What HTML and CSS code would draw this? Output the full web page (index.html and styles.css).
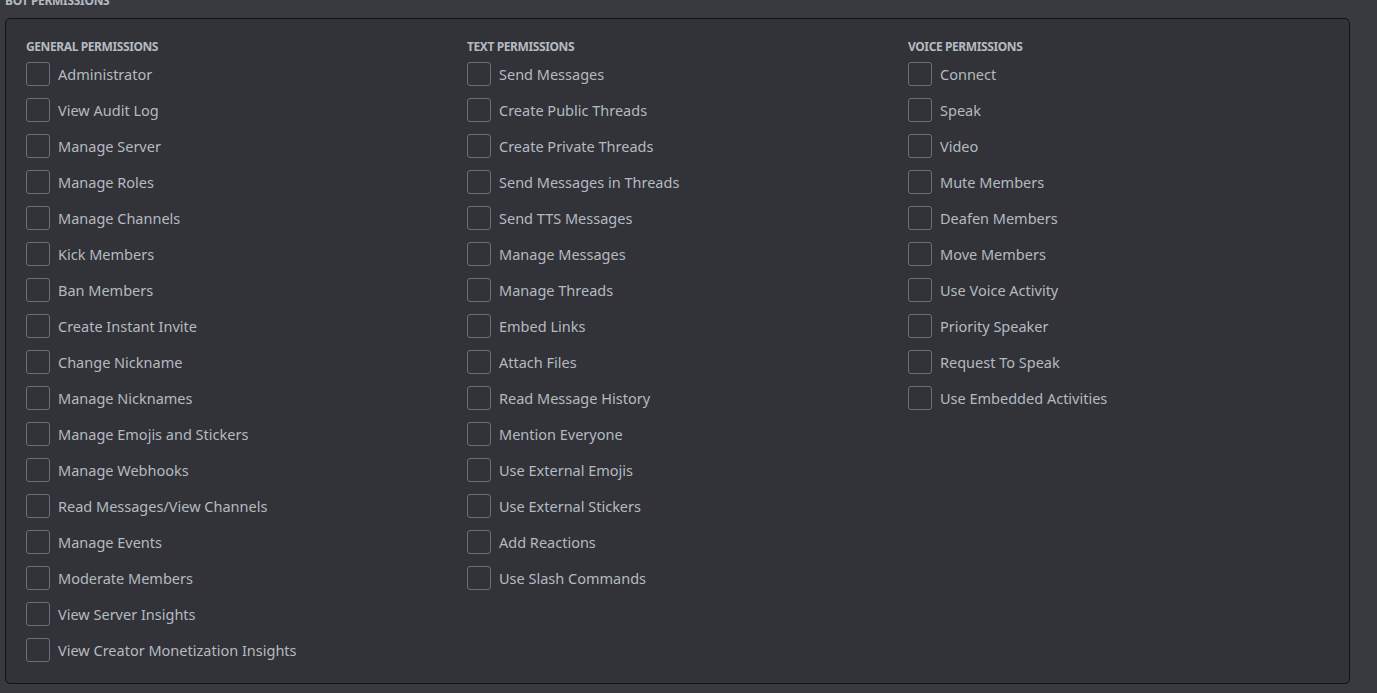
FILE: index.html
```html
<!DOCTYPE html>
<html>
<head>
<meta charset="utf-8">
<link rel="stylesheet" href="styles.css">
</head>
<body>
<div class="page">
  <h2 class="title">Bot Permissions</h2>
  <div class="box">
    <div class="col">
      <h3 class="head">General Permissions</h3>
      <ul class="list">
        <li class="item"><span class="cb"></span><span class="lbl">Administrator</span></li>
        <li class="item"><span class="cb"></span><span class="lbl">View Audit Log</span></li>
        <li class="item"><span class="cb"></span><span class="lbl">Manage Server</span></li>
        <li class="item"><span class="cb"></span><span class="lbl">Manage Roles</span></li>
        <li class="item"><span class="cb"></span><span class="lbl">Manage Channels</span></li>
        <li class="item"><span class="cb"></span><span class="lbl">Kick Members</span></li>
        <li class="item"><span class="cb"></span><span class="lbl">Ban Members</span></li>
        <li class="item"><span class="cb"></span><span class="lbl">Create Instant Invite</span></li>
        <li class="item"><span class="cb"></span><span class="lbl">Change Nickname</span></li>
        <li class="item"><span class="cb"></span><span class="lbl">Manage Nicknames</span></li>
        <li class="item"><span class="cb"></span><span class="lbl">Manage Emojis and Stickers</span></li>
        <li class="item"><span class="cb"></span><span class="lbl">Manage Webhooks</span></li>
        <li class="item"><span class="cb"></span><span class="lbl">Read Messages/View Channels</span></li>
        <li class="item"><span class="cb"></span><span class="lbl">Manage Events</span></li>
        <li class="item"><span class="cb"></span><span class="lbl">Moderate Members</span></li>
        <li class="item"><span class="cb"></span><span class="lbl">View Server Insights</span></li>
        <li class="item"><span class="cb"></span><span class="lbl">View Creator Monetization Insights</span></li>
      </ul>
    </div>
    <div class="col">
      <h3 class="head">Text Permissions</h3>
      <ul class="list">
        <li class="item"><span class="cb"></span><span class="lbl">Send Messages</span></li>
        <li class="item"><span class="cb"></span><span class="lbl">Create Public Threads</span></li>
        <li class="item"><span class="cb"></span><span class="lbl">Create Private Threads</span></li>
        <li class="item"><span class="cb"></span><span class="lbl">Send Messages in Threads</span></li>
        <li class="item"><span class="cb"></span><span class="lbl">Send TTS Messages</span></li>
        <li class="item"><span class="cb"></span><span class="lbl">Manage Messages</span></li>
        <li class="item"><span class="cb"></span><span class="lbl">Manage Threads</span></li>
        <li class="item"><span class="cb"></span><span class="lbl">Embed Links</span></li>
        <li class="item"><span class="cb"></span><span class="lbl">Attach Files</span></li>
        <li class="item"><span class="cb"></span><span class="lbl">Read Message History</span></li>
        <li class="item"><span class="cb"></span><span class="lbl">Mention Everyone</span></li>
        <li class="item"><span class="cb"></span><span class="lbl">Use External Emojis</span></li>
        <li class="item"><span class="cb"></span><span class="lbl">Use External Stickers</span></li>
        <li class="item"><span class="cb"></span><span class="lbl">Add Reactions</span></li>
        <li class="item"><span class="cb"></span><span class="lbl">Use Slash Commands</span></li>
      </ul>
    </div>
    <div class="col">
      <h3 class="head">Voice Permissions</h3>
      <ul class="list">
        <li class="item"><span class="cb"></span><span class="lbl">Connect</span></li>
        <li class="item"><span class="cb"></span><span class="lbl">Speak</span></li>
        <li class="item"><span class="cb"></span><span class="lbl">Video</span></li>
        <li class="item"><span class="cb"></span><span class="lbl">Mute Members</span></li>
        <li class="item"><span class="cb"></span><span class="lbl">Deafen Members</span></li>
        <li class="item"><span class="cb"></span><span class="lbl">Move Members</span></li>
        <li class="item"><span class="cb"></span><span class="lbl">Use Voice Activity</span></li>
        <li class="item"><span class="cb"></span><span class="lbl">Priority Speaker</span></li>
        <li class="item"><span class="cb"></span><span class="lbl">Request To Speak</span></li>
        <li class="item"><span class="cb"></span><span class="lbl">Use Embedded Activities</span></li>
      </ul>
    </div>
  </div>
</div>
</body>
</html>
```
FILE: styles.css
```css
html, body {
  margin: 0;
  padding: 0;
  background: #383a40;
  height: 100%;
  overflow: hidden;
}
body {
  font-family: "Noto Sans", "Open Sans", sans-serif;
  color: #b5bac1;
}
.page {
  padding-left: 5px;
}
.title {
  margin: -7px 0 0 0;
  height: 25px;
  font-size: 12px;
  font-weight: 700;
  line-height: 16px;
  letter-spacing: -0.3px;
  text-transform: uppercase;
  color: #b5bac1;
}
.box {
  box-sizing: border-box;
  width: 1345px;
  height: 666px;
  background: #313338;
  border: 1px solid #111214;
  border-radius: 5px;
  padding: 20px 20px 0 20px;
  display: grid;
  grid-template-columns: 441px 441px 441px;
}
.head {
  margin: 0;
  font-size: 12px;
  font-weight: 700;
  line-height: 16px;
  letter-spacing: -0.4px;
  text-transform: uppercase;
  color: #b5bac1;
}
.list {
  list-style: none;
  margin: 7px 0 0 0;
  padding: 0;
  display: flex;
  flex-direction: column;
  gap: 12px;
}
.item {
  display: flex;
  align-items: center;
  height: 24px;
  gap: 8px;
}
.cb {
  box-sizing: border-box;
  width: 24px;
  height: 24px;
  border: 1px solid #6d6f78;
  border-radius: 3px;
  flex: none;
}
.lbl {
  font-size: 14.5px;
  line-height: 20px;
  color: #b5bac1;
}
```
